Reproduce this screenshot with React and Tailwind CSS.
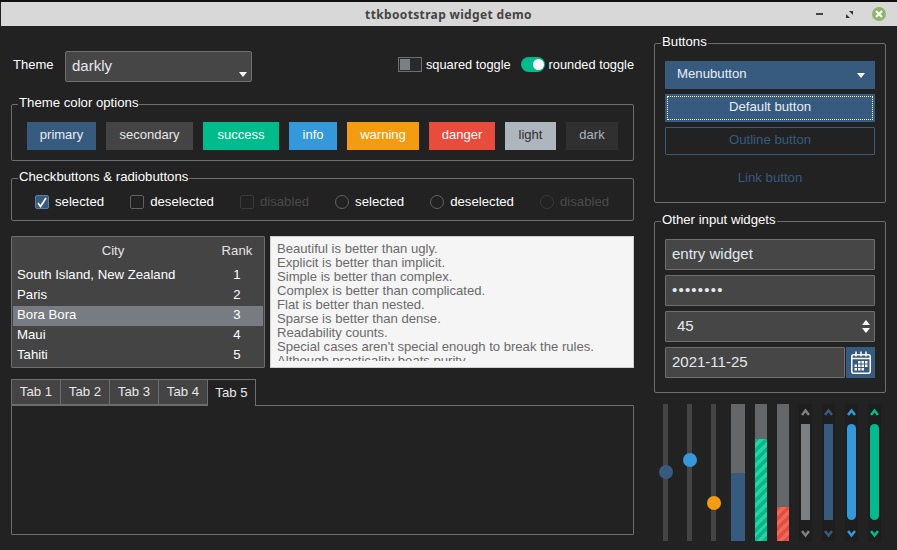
const swatches = [
  ['primary', 'w-[69px] bg-[#375a7f] text-[#e8eef4]'],
  ['secondary', 'w-[87px] bg-[#444444] text-[#e8e8e8]'],
  ['success', 'w-[76px] bg-[#00bc8c] text-white'],
  ['info', 'w-[48px] bg-[#3498db] text-white'],
  ['warning', 'w-[72px] bg-[#f39c12] text-white'],
  ['danger', 'w-[66px] bg-[#e74c3c] text-white'],
  ['light', 'w-[51px] bg-[#adb5bd] text-[#303030]'],
  ['dark', 'w-[52px] bg-[#303030] text-[#adb5bd]'],
]

const cities = [
  ['South Island, New Zealand', 1],
  ['Paris', 2],
  ['Bora Bora', 3],
  ['Maui', 4],
  ['Tahiti', 5],
]

const zen = [
  'Beautiful is better than ugly.',
  'Explicit is better than implicit.',
  'Simple is better than complex.',
  'Complex is better than complicated.',
  'Flat is better than nested.',
  'Sparse is better than dense.',
  'Readability counts.',
  "Special cases aren't special enough to break the rules.",
  'Although practicality beats purity.',
]

function Frame({ label, className, children }) {
  return (
    <div className={`relative border border-[#6b6e71] rounded-[2px] ${className}`}>
      <span className="absolute left-[6px] top-[-10px] bg-[#222222] px-[1px] text-[13.2px] leading-[16px] text-white whitespace-nowrap">
        {label}
      </span>
      {children}
    </div>
  )
}

function Caret({ className = '' }) {
  return (
    <svg width="8" height="5" viewBox="0 0 8 5" className={className}>
      <path d="M0 0h8L4 5z" fill="#fff" />
    </svg>
  )
}

function CheckItem({ label, state }) {
  const disabled = state === 'disabled'
  return (
    <div className="flex items-center gap-[6px]">
      {state === 'selected' ? (
        <span className="w-[14px] h-[14px] mt-[2px] rounded-[2px] bg-[#375a7f] border border-[#5f7d9c] flex items-center justify-center">
          <svg width="10" height="11" viewBox="0 0 10 11">
            <path d="M1 6l2.5 3.5L9 1" fill="none" stroke="#fff" strokeWidth="1.7" />
          </svg>
        </span>
      ) : (
        <span className={`w-[14px] h-[14px] mt-[2px] rounded-[2px] border ${disabled ? 'border-[#3a3a3a]' : 'border-[#5f6265]'}`} />
      )}
      <span className={disabled ? 'text-[#4a4a4a]' : 'text-white'}>{label}</span>
    </div>
  )
}

function RadioItem({ label, disabled }) {
  return (
    <div className="flex items-center gap-[6px]">
      <span className={`w-[14px] h-[14px] mt-[2px] rounded-full border ${disabled ? 'border-[#3a3a3a]' : 'border-[#5f6265]'}`} />
      <span className={disabled ? 'text-[#4a4a4a]' : 'text-white'}>{label}</span>
    </div>
  )
}

function Slider({ handle, top }) {
  return (
    <div className="relative w-[24px] h-[137px] pl-[9px]">
      <div className="w-[5px] h-full bg-[#444444]" />
      <div className={`absolute left-[5px] w-[14px] h-[14px] rounded-full ${handle}`} style={{ top }} />
    </div>
  )
}

function Progress({ width, fill, height }) {
  return (
    <div className={`${width} h-[137px] bg-[#636769] flex flex-col justify-end`}>
      <div className={fill} style={{ height }} />
    </div>
  )
}

function Scroll({ color, thumb, rounded }) {
  return (
    <div className="w-[13px] h-[137px] bg-[#1e1e1e] flex flex-col items-center pt-[4px]">
      <svg width="9" height="8" viewBox="0 0 9 8" className={color}>
        <path d="M1 7L4.500 2.500L8 7" fill="none" stroke="currentColor" strokeWidth="2.6" />
      </svg>
      <div className={`mt-[8px] w-[9px] h-[96px] ${thumb} ${rounded ? 'rounded-full' : ''}`} />
      <svg width="9" height="8" viewBox="0 0 9 8" className={`mt-[10px] ${color}`}>
        <path d="M1 1L4.500 5.500L8 1" fill="none" stroke="currentColor" strokeWidth="2.6" />
      </svg>
    </div>
  )
}

export default function App() {
  return (
    <div className="w-[897px] h-[550px] overflow-hidden bg-[#222222] flex flex-col text-[13.2px] text-white font-['Liberation_Sans',Arial,sans-serif]">
      <div className="h-[2px] bg-[#111111]" />
      <div className="h-[24px] ml-[1px] bg-[#d8d8d8] flex items-center relative">
        <span className="flex-1 text-center pt-[1px] pr-[1px] text-[12px] font-bold tracking-[0.35px] text-[#444444] font-['Noto_Sans',sans-serif]">
          ttkbootstrap widget demo
        </span>
        <div className="absolute right-[11px] top-[5px] flex items-center">
          <span className="w-[7px] h-[2px] bg-[#444444] mr-[23px]" />
          <svg width="7" height="7" viewBox="0 0 7 7" className="mr-[19px]">
            <path d="M3 0h4v4zM0 3l4 4H0z" fill="#333" />
          </svg>
          <span className="w-[14px] h-[14px] rounded-full bg-[#8db56b] flex items-center justify-center">
            <svg width="8" height="8" viewBox="0 0 8 8">
              <path d="M1 1l6 6M7 1L1 7" stroke="#fff" strokeWidth="2" />
            </svg>
          </span>
        </div>
      </div>

      <div className="flex-1 flex">
        {/* left column */}
        <div className="w-[623px] ml-[11px] pt-[25px] flex flex-col">
          <div className="flex items-center h-[31px]">
            <span className="ml-[2px] w-[52px] mb-[4px] text-[13px]">Theme</span>
            <div className="relative w-[187px] h-[31px] bg-[#464646] border border-[#6f6f6f] rounded-[2px] pl-[6px] flex items-center text-[15px] text-[#e4e9ee]">
              darkly
              <Caret className="absolute right-[4px] bottom-[4px]" />
            </div>
            <div className="ml-auto flex items-center gap-[4px] mb-[4px] text-[12.8px]">
              <span className="w-[24px] h-[15px] border border-[#6b6e71] bg-[#2a2a2a] pl-[1px] py-[1px] flex">
                <span className="w-[10px] h-full bg-[#7b8085]" />
              </span>
              <span>squared toggle</span>
              <span className="ml-[6px] w-[24px] h-[15px] rounded-full bg-[#00bc8c] flex items-center justify-end pr-[1px]">
                <span className="w-[11px] h-[11px] rounded-full bg-white" />
              </span>
              <span>rounded toggle</span>
            </div>
          </div>

          <Frame label="Theme color options" className="mt-[22px] h-[57px] pl-[15px] pt-[17px]">
            <div className="flex gap-[10px] text-[13px]">
              {swatches.map(([name, tone]) => (
                <div key={name} className={`h-[28px] flex items-center justify-center pb-[3px] ${tone}`}>
                  {name}
                </div>
              ))}
            </div>
          </Frame>

          <Frame label="Checkbuttons & radiobuttons" className="mt-[17px] h-[43px] pl-[23px] pt-[4px] flex items-center gap-[26px]">
            <CheckItem label="selected" state="selected" />
            <CheckItem label="deselected" />
            <CheckItem label="disabled" state="disabled" />
            <RadioItem label="selected" />
            <RadioItem label="deselected" />
            <RadioItem label="disabled" disabled />
          </Frame>

          <div className="mt-[15px] flex gap-[5px] h-[132px]">
            <div className="w-[254px] bg-[#444444] border border-[#6b6e71] rounded-[1px] p-[1px] flex flex-col leading-[14px]">
              <div className="h-[28px] pb-[2px] grid grid-cols-[200px_48px] items-center text-center text-[#e4e4e4]">
                <span>City</span>
                <span>Rank</span>
              </div>
              {cities.map(([city, rank]) => (
                <div
                  key={city}
                  className={`h-[20px] pb-[2px] grid grid-cols-[200px_48px] items-center ${city === 'Bora Bora' ? 'bg-[#777c82]' : ''}`}
                >
                  <span className="pl-[4px] whitespace-nowrap">{city}</span>
                  <span className="text-center">{rank}</span>
                </div>
              ))}
            </div>
            <div className="flex-1 bg-[#f5f5f5] border border-[#d0d0d0] px-[6px] py-[5px] text-[#6a6a6a] text-[13.1px]">
              <div className="h-[119px] overflow-hidden leading-[14px]">
                {zen.map((line) => (
                  <div key={line} className="whitespace-nowrap">{line}</div>
                ))}
              </div>
            </div>
          </div>

          <div className="mt-[11px] flex h-[26px] relative z-10">
            {['Tab 1', 'Tab 2', 'Tab 3', 'Tab 4'].map((tab) => (
              <div key={tab} className="w-[49px] bg-[#444444] border border-[#6b6e71] border-r-0 flex items-center justify-center text-[#e8e8e8]">
                {tab}
              </div>
            ))}
            <div className="w-[49px] h-[27px] bg-[#222222] border border-[#6b6e71] border-b-0 flex items-center justify-center text-[#e8e8e8] pb-[1px]">
              Tab 5
            </div>
          </div>
          <div className="h-[130px] border border-[#6b6e71] rounded-b-[1px]" />
        </div>

        {/* right column */}
        <div className="w-[232px] ml-[20px] pt-[17px] flex flex-col">
          <Frame label="Buttons" className="h-[160px] px-[10px] pt-[17px] flex flex-col gap-[5px]">
            <div className="h-[28px] shrink-0 bg-[#375a7f] pl-[12px] pr-[10px] flex items-center justify-between">
              <span className="text-[#e8eef4] pb-[3px]">Menubutton</span>
              <Caret />
            </div>
            <div className="h-[28px] shrink-0 bg-[#375a7f] p-[2px]">
              <div className="h-full pb-[3px] border border-dotted border-white flex items-center justify-center text-[#e8eef4]">
                Default button
              </div>
            </div>
            <div className="h-[28px] shrink-0 pb-[3px] border border-[#375a7f] rounded-[1px] flex items-center justify-center text-[#375a7f]">
              Outline button
            </div>
            <div className="h-[34px] shrink-0 pt-[1px] flex items-center justify-center text-[#375a7f]">Link button</div>
          </Frame>

          <Frame label="Other input widgets" className="mt-[18px] h-[172px] px-[10px] pt-[17px] flex flex-col gap-[5px] text-[15px] text-[#e4e9ee]">
            <div className="h-[31px] shrink-0 bg-[#464646] border border-[#6f6f6f] rounded-[1px] pl-[6px] flex items-center">entry widget</div>
            <div className="h-[31px] shrink-0 bg-[#464646] border border-[#6f6f6f] rounded-[1px] pl-[6px] flex items-center tracking-[1.2px]">••••••••</div>
            <div className="h-[31px] shrink-0 bg-[#464646] border border-[#6f6f6f] rounded-[1px] pl-[11px] pr-[4px] flex items-center justify-between">
              45
              <span className="flex flex-col gap-[3px]">
                <svg width="8" height="5" viewBox="0 0 8 5"><path d="M0 5h8L4 0z" fill="#fff" /></svg>
                <Caret />
              </span>
            </div>
            <div className="h-[31px] shrink-0 flex">
              <div className="w-[180px] bg-[#464646] border border-[#6f6f6f] rounded-[1px] pl-[6px] flex items-center">2021-11-25</div>
              <div className="w-[29px] ml-[1px] bg-[#375a7f] flex items-center justify-center">
                <svg width="20" height="23" viewBox="0 0 20 23" fill="none">
                  <rect x="0.75" y="3.75" width="18.5" height="18.5" rx="2" stroke="#fff" strokeWidth="1.5" />
                  <path d="M1 7.5h18" stroke="#fff" strokeWidth="1.5" />
                  <path d="M5 0.5v5M10 0.5v5M15 0.5v5" stroke="#fff" strokeWidth="1.5" />
                  <path d="M7 10h2.5v2.5H7zM10.5 10H13v2.5h-2.500zM14 10h2.500v2.5H14zM3.500 13.500H6V16H3.500zM7 13.500h2.500V16H7zM10.500 13.500H13V16h-2.500zM14 13.500h2.500V16H14zM3.500 17H6v2.500H3.500zM7 17h2.500v2.500H7zM10.500 17H13v2.500h-2.500z" fill="#fff" />
                </svg>
              </div>
            </div>
          </Frame>

          <div className="mt-[11px] flex">
            <Slider handle="bg-[#375a7f]" top="61px" />
            <Slider handle="bg-[#3498db]" top="49px" />
            <Slider handle="bg-[#f39c12]" top="92px" />
            <div className="ml-[5px] flex gap-[10px]">
              <Progress width="w-[14px]" fill="bg-[#375a7f]" height="68px" />
              <Progress width="w-[12px]" fill="bg-[repeating-linear-gradient(135deg,#00bc8c_0,#00bc8c_3.5px,#2bd0a6_3.5px,#2bd0a6_7px)]" height="102px" />
              <Progress width="w-[12px]" fill="bg-[repeating-linear-gradient(135deg,#e74c3c_0,#e74c3c_3.5px,#ec6a5d_3.5px,#ec6a5d_7px)]" height="34px" />
            </div>
            <div className="ml-[10px] flex gap-[10px]">
              <Scroll color="text-[#7b8085]" thumb="bg-[#7b8085]" />
              <Scroll color="text-[#375a7f]" thumb="bg-[#375a7f]" />
              <Scroll color="text-[#3498db]" thumb="bg-[#3498db]" rounded />
              <Scroll color="text-[#00bc8c]" thumb="bg-[#00bc8c]" rounded />
            </div>
          </div>
        </div>
      </div>
    </div>
  )
}
